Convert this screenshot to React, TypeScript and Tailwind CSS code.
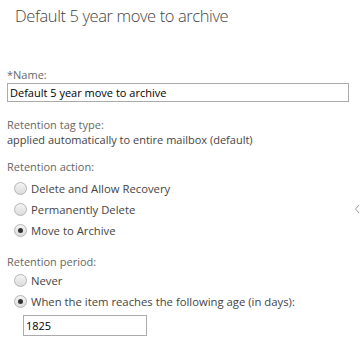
import React from "react";

function Radio({ checked, label }: { checked?: boolean; label: string }) {
  return (
    <div className="flex h-[21px] items-center">
      <span className="ml-[7px] flex h-[13px] w-[13px] shrink-0 items-center justify-center rounded-full border border-[#b4b4b4] bg-[linear-gradient(#f4f4f4,#dcdcdc)]">
        {checked && <span className="h-[5px] w-[5px] rounded-full bg-[#333]" />}
      </span>
      <span className="ml-[4px] text-[11.3px] text-[#444]">{label}</span>
    </div>
  );
}

export default function App() {
  return (
    <div
      className="relative h-[339px] w-[361px] overflow-hidden bg-white text-[11px] leading-[15px]"
      style={{ fontFamily: '"Open Sans", "Noto Sans", Arial, sans-serif' }}
    >
      <div className="h-[32px] pl-[15px] text-[16.5px] font-light leading-[32px] tracking-[-0.4px] text-[#444]">
        Default 5 year move to archive
      </div>
      <div className="pl-[7px] pt-[35px]">
        <div className="text-[#666]">*Name:</div>
        <div className="mt-[1px] flex h-[19px] w-[342px] items-center border border-[#ababab] pl-[2px] text-black">
          Default 5 year move to archive
        </div>
        <div className="mt-[15px] text-[#666]">Retention tag type:</div>
        <div className="text-[#444]">applied automatically to entire mailbox (default)</div>
        <div className="mt-[12px] text-[#666]">Retention action:</div>
        <div className="mt-[4px]">
          <Radio label="Delete and Allow Recovery" />
          <Radio label="Permanently Delete" />
          <Radio checked label="Move to Archive" />
        </div>
        <div className="mt-[13px] text-[#666]">Retention period:</div>
        <div className="mt-[1px]">
          <Radio label="Never" />
          <Radio checked label="When the item reaches the following age (in days):" />
        </div>
        <div className="ml-[16px] mt-[3px] flex h-[21px] w-[124px] items-center border border-[#ababab] pl-[2px] text-black">
          1825
        </div>
      </div>
      <svg className="absolute left-[354px] top-[204px]" width="6" height="10" viewBox="0 0 6 10">
        <path d="M5 1 L1.5 5 L5 9" fill="none" stroke="#a0a0a0" strokeWidth="1" />
      </svg>
    </div>
  );
}
